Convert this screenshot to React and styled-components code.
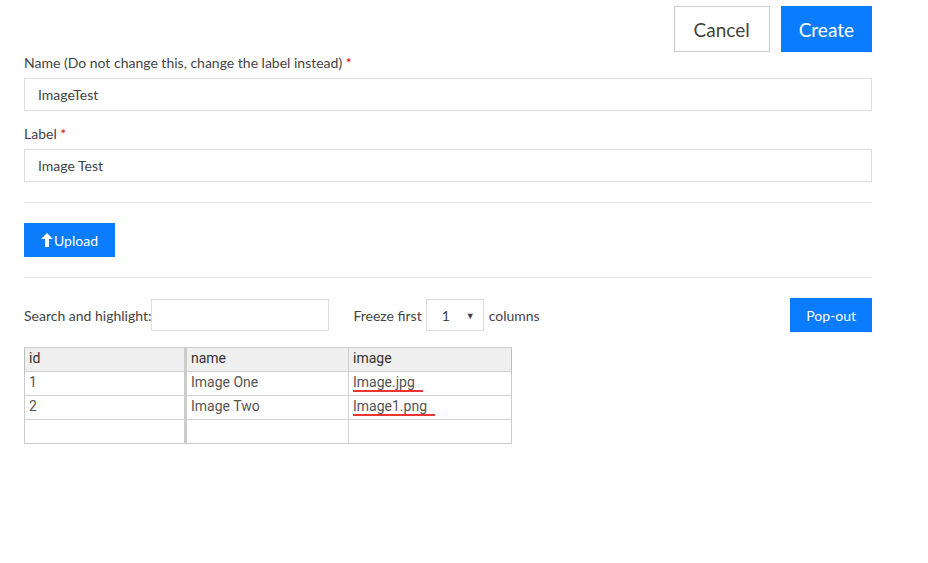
import React from "react"
import styled, { createGlobalStyle } from "styled-components"

const Global = createGlobalStyle`
  body { margin: 0; background: #fff; font-family: Lato, "Liberation Sans", sans-serif; color: #444; }
`

const Page = styled.div`
  width: 848px;
  padding: 6px 0 0 24px;
  display: flex;
  flex-direction: column;
`

const Actions = styled.div`
  display: flex;
  justify-content: flex-end;
  gap: 11px;
`

const BigButton = styled.button`
  height: 46px;
  padding: 0 ${p => (p.$primary ? "17px" : "19px")};
  font: 19px Lato, "Liberation Sans", sans-serif;
  border: 1px solid ${p => (p.$primary ? "#0a7cff" : "#ccc")};
  background: ${p => (p.$primary ? "#0a7cff" : "#fff")};
  color: ${p => (p.$primary ? "#fff" : "#444")};
`

const Label = styled.div`
  font-size: 14px;
  color: #444;
  margin: ${p => p.$first ? "2px" : "14px"} 0 7px;
  span { color: #d00; }
`

const Input = styled.div`
  height: 31px;
  border: 1px solid #ddd;
  display: flex;
  align-items: center;
  padding-left: 13px;
  font-size: 14px;
  color: #444;
`

const Rule = styled.div`
  height: 1px;
  background: #e8e8e8;
  margin: 20px 0;
`

const Primary = styled.button`
  height: 34px;
  background: #0a7cff;
  color: #fff;
  border: none;
  font: 14px Lato, "Liberation Sans", sans-serif;
  padding: 0 ${p => p.$pad || "16px"};
  display: flex;
  align-items: center;
  gap: 1px;
`

const Bar = styled.div`
  display: flex;
  align-items: center;
  font-size: 14px;
  margin-top: 0;
`

const SmallInput = styled.div`
  width: ${p => p.$w}px;
  height: 32px;
  border: 1px solid #ddd;
  margin: 0 ${p => p.$mr || 0}px 0 ${p => p.$ml || 0}px;
  display: flex;
  align-items: center;
  justify-content: space-between;
  padding: 0 8px 0 15px;
  box-sizing: border-box;
`

const Grid = styled.div`
  margin-top: 15px;
  width: 486px;
  border: 1px solid #ccc;
  font-family: Roboto, "Liberation Sans", sans-serif;
  font-size: 14px;
`

const GridRow = styled.div`
  display: grid;
  grid-template-columns: 162px 162px 1fr;
  height: 23px;
  background: ${p => (p.$head ? "#efefef" : "#fff")};
  color: ${p => (p.$head ? "#333" : "#555")};
  border-bottom: ${p => (p.$last ? "none" : "1px solid #d0d0d0")};
  box-shadow: ${p => (p.$head ? "0 2px 2px rgba(0,0,0,0.25)" : "none")};
  position: relative;
`

const Cell = styled.div`
  padding: 2px 4px;
  border-right: ${p => (p.$frozen ? "3px solid #ccc" : p.$end ? "none" : "1px solid #d0d0d0")};
  box-sizing: border-box;
  white-space: nowrap;
`

const Link = styled.span`
  border-bottom: 2px solid #e33;
  padding-right: 8px;
`

const rows = [
  ["1", "Image One", "Image.jpg"],
  ["2", "Image Two", "Image1.png"],
  ["", "", ""],
]

export default function App() {
  return (
    <Page>
      <Global />
      <Actions>
        <BigButton>Cancel</BigButton>
        <BigButton $primary>Create</BigButton>
      </Actions>
      <Label $first>Name (Do not change this, change the label instead) <span>*</span></Label>
      <Input>ImageTest</Input>
      <Label>Label <span>*</span></Label>
      <Input>Image Test</Input>
      <Rule />
      <div>
        <Primary $pad="17px">
          <svg width="12" height="14" viewBox="0 0 12 14"><path d="M6 0 L12 6 H8 V14 H4 V6 H0 Z" fill="#fff" /></svg>
          Upload
        </Primary>
      </div>
      <Rule />
      <Bar>
        Search and highlight:
        <SmallInput $w={178} $mr={24} />
        Freeze first
        <SmallInput $w={58} $ml={4} $mr={5}>1<span style={{ fontSize: 9 }}>▼</span></SmallInput>
        columns
        <div style={{ flex: 1 }} />
        <Primary>Pop-out</Primary>
      </Bar>
      <Grid>
        <GridRow $head>
          <Cell $frozen>id</Cell><Cell>name</Cell><Cell $end>image</Cell>
        </GridRow>
        {rows.map((r, i) => (
          <GridRow key={i} $last={i === rows.length - 1}>
            <Cell $frozen>{r[0]}</Cell>
            <Cell>{r[1]}</Cell>
            <Cell $end>{r[2] && <Link>{r[2]}</Link>}</Cell>
          </GridRow>
        ))}
      </Grid>
    </Page>
  )
}
